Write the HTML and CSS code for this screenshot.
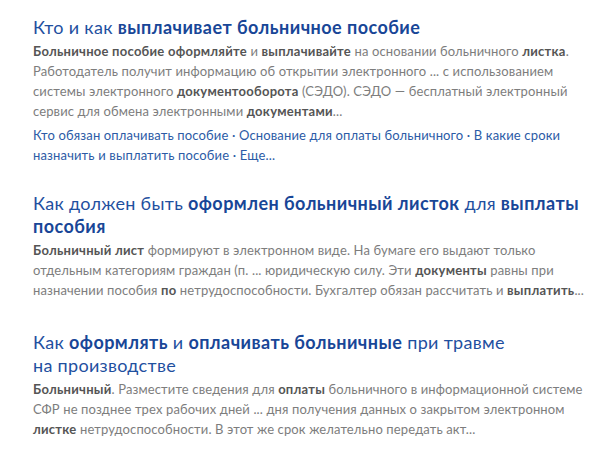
FILE: index.html
```html
<!DOCTYPE html>
<html lang="ru">
<head>
<meta charset="utf-8">
<link rel="stylesheet" href="styles.css">
</head>
<body>
<div class="results">
  <div class="result">
    <div class="title">Кто и как <b>выплачивает больничное пособие</b></div>
    <div class="snippet"><b>Больничное пособие оформляйте</b> и <b>выплачивайте</b> на основании больничного <b>листка</b>. Работодатель получит информацию об открытии электронного ... с использованием системы электронного <b>документооборота</b> (СЭДО). СЭДО — бесплатный электронный сервис для обмена электронными <b>документами</b>...</div>
    <div class="links">Кто обязан оплачивать пособие · Основание для оплаты больничного · В какие сроки назначить и выплатить пособие · Еще...</div>
  </div>
  <div class="result">
    <div class="title">Как должен быть <b>оформлен больничный листок</b> для <b>выплаты пособия</b></div>
    <div class="snippet"><b>Больничный лист</b> формируют в электронном виде. На бумаге его выдают только отдельным категориям граждан (п. ... юридическую силу. Эти <b>документы</b> равны при назначении пособия <b>по</b> нетрудоспособности. Бухгалтер обязан рассчитать и <b>выплатить</b>...</div>
  </div>
  <div class="result">
    <div class="title">Как <b>оформлять</b> и <b>оплачивать больничные</b> при травме<br>на производстве</div>
    <div class="snippet"><b>Больничный</b>. Разместите сведения для <b>оплаты</b> больничного в информационной системе СФР не позднее трех рабочих дней ... дня получения данных о закрытом электронном <b>листке</b> нетрудоспособности. В этот же срок желательно передать акт...</div>
  </div>
</div>
</body>
</html>
```

FILE: styles.css
```css
html, body {
  margin: 0;
  padding: 0;
  background: #ffffff;
}
body {
  font-family: Lato, "Open Sans", sans-serif;
}
.results {
  padding: 16px 3px 0 33px;
  display: flex;
  flex-direction: column;
  gap: 27px;
}
.title {
  font-size: 18px;
  line-height: 23px;
  color: #1f509f;
  letter-spacing: 0.3px;
}
.title b {
  font-weight: 700;
  color: #184697;
  letter-spacing: 0.45px;
}
.snippet {
  font-size: 13px;
  line-height: 20px;
  color: #7d7d7d;
  margin-top: 2px;
  letter-spacing: 0.13px;
}
.snippet:last-child {
  margin-bottom: 4px;
}
.snippet b {
  color: #555555;
  font-weight: 700;
  letter-spacing: 0.25px;
}
.links {
  font-size: 13px;
  line-height: 20px;
  margin-top: 4px;
  color: #2c5ba6;
  letter-spacing: 0.15px;
}
```
